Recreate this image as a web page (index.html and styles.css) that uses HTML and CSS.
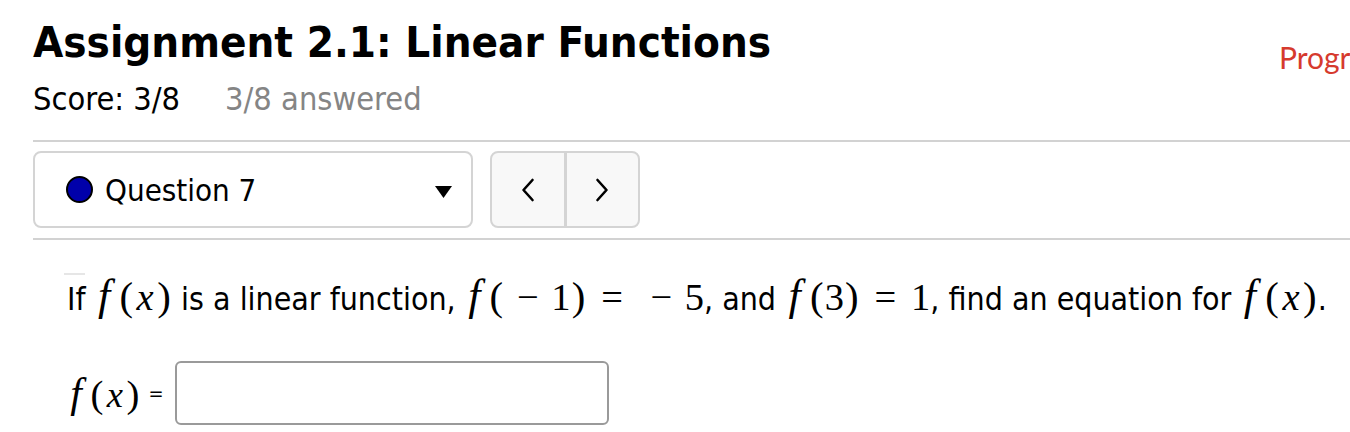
FILE: index.html
```html
<!DOCTYPE html>
<html lang="en">
<head>
<meta charset="utf-8">
<title>Assignment 2.1: Linear Functions</title>
<link rel="stylesheet" href="styles.css">
</head>
<body>
<div class="page">
  <header class="head">
    <div class="titles">
      <h1 class="title">Assignment 2.1: Linear Functions</h1>
      <div class="score">
        <span class="score-val">Score: 3/8</span>
        <span class="answered">3/8 answered</span>
      </div>
    </div>
    <a class="progress" href="#">Progress</a>
  </header>

  <nav class="qnav">
    <div class="qselect">
      <span class="dot"></span>
      <span class="qlabel">Question 7</span>
      <svg class="caret" width="17" height="12" viewBox="0 0 17 12"><path d="M0 0 H17 L8.5 12 Z" fill="#000"/></svg>
    </div>
    <div class="arrows">
      <button class="arrow" aria-label="Previous">
        <svg width="16" height="26" viewBox="0 0 16 26"><path d="M12.5 3 L3.5 13 L12.5 23" fill="none" stroke="#000" stroke-width="2.6" stroke-linecap="round" stroke-linejoin="round"/></svg>
      </button>
      <button class="arrow" aria-label="Next">
        <svg width="16" height="26" viewBox="0 0 16 26"><path d="M3.5 3 L12.5 13 L3.5 23" fill="none" stroke="#000" stroke-width="2.6" stroke-linecap="round" stroke-linejoin="round"/></svg>
      </button>
    </div>
  </nav>

  <section class="question">
    <div class="mark"></div>
    <p class="qtext">If <span class="m"><i class="fn">f</i><span class="p">(</span><i class="var">x</i><span class="p">)</span></span> is a linear function, <span class="m"><i class="fn">f</i><span class="p">(</span><span class="bin">&minus;</span>1<span class="p">)</span><span class="rel">=</span><span class="bin">&minus;</span>5</span>, and <span class="m"><i class="fn">f</i><span class="p">(</span>3<span class="p">)</span><span class="rel">=</span>1</span>, find an equation for <span class="m"><i class="fn">f</i><span class="p">(</span><i class="var">x</i><span class="p">)</span></span>.</p>
    <div class="answer">
      <span class="m m-ans"><i class="fn">f</i><span class="p">(</span><i class="var">x</i><span class="p">)</span></span>
      <span class="eq">=</span>
      <input class="ans-input" type="text" aria-label="answer">
    </div>
  </section>
</div>
</body>
</html>
```
FILE: styles.css
```css
html, body {
  margin: 0;
  padding: 0;
  background: #fff;
  overflow: hidden;
}
body {
  font-family: "DejaVu Sans Condensed", "DejaVu Sans", sans-serif;
  color: #000;
}
.page {
  width: 1420px;
  padding-left: 33px;
}
.head {
  display: flex;
  align-items: flex-start;
  justify-content: space-between;
  box-sizing: border-box;
  padding-top: 14px;
  height: 142px;
  border-bottom: 2px solid #d2d2d2;
  margin-bottom: 9px;
}
.title {
  margin: 0;
  font-weight: 700;
  font-size: 43.5px;
  line-height: 56px;
}
.score {
  display: flex;
  gap: 45px;
  font-size: 32.3px;
  line-height: 40px;
  margin-top: 9px;
}
.answered {
  color: #858585;
}
.progress {
  color: #d63a2e;
  font-family: "Lato", sans-serif;
  font-size: 30px;
  text-decoration: none;
  margin-top: 25px;
  width: 174px;
  white-space: nowrap;
}
.qnav {
  display: flex;
  gap: 17px;
  height: 89px;
  border-bottom: 2px solid #d2d2d2;
  box-sizing: border-box;
}
.qselect {
  width: 440px;
  height: 77px;
  box-sizing: border-box;
  border: 2px solid #d4d4d4;
  border-radius: 8px;
  display: flex;
  align-items: center;
  padding: 0 19px 0 31px;
}
.dot {
  width: 27px;
  height: 27px;
  box-sizing: border-box;
  border-radius: 50%;
  background: #0000aa;
  border: 2.5px solid #000;
  margin-right: 12px;
  flex-shrink: 0;
}
.qlabel {
  font-size: 31px;
  flex: 1;
}
.caret {
  display: block;
  margin-top: 4px;
}
.arrows {
  display: flex;
  width: 150px;
  height: 77px;
  box-sizing: border-box;
  border: 2px solid #d4d4d4;
  border-radius: 8px;
  background: #f8f8f8;
  overflow: hidden;
}
.arrow {
  flex: 1;
  border: none;
  background: transparent;
  display: flex;
  align-items: center;
  justify-content: center;
  padding: 0;
}
.arrow svg {
  display: block;
}
.arrow + .arrow {
  border-left: 3px solid #d4d4d4;
}
.question {
  padding-left: 34px;
}
.mark {
  width: 21px;
  height: 2px;
  background: #e6e6e6;
  margin: 33px 0 0 -3px;
}
.qtext {
  margin: 0;
  font-size: 31.8px;
  line-height: 40px;
  padding-top: 0;
  white-space: nowrap;
}
.m {
  font-family: "Liberation Serif", "DejaVu Serif", serif;
  font-size: 38.5px;
}
.m i {
  font-style: italic;
}
.fn {
  display: inline-block;
  font-size: 1.14em;
  width: 0.54em;
  text-indent: 0.08em;
}
.var {
  display: inline-block;
  width: 0.572em;
  text-align: center;
}
.p {
  display: inline-block;
  width: 0.389em;
  text-align: center;
  font-size: 1.06em;
}
.bin {
  display: inline-block;
  width: 0.778em;
  text-align: center;
  margin: 0 0.222em;
}
.rel {
  display: inline-block;
  width: 0.778em;
  text-align: center;
  margin: 0 0.278em;
}
.answer {
  display: flex;
  align-items: center;
  margin-top: 42px;
}
.m-ans {
  font-size: 36.5px;
}
.eq {
  font-size: 20px;
  margin: 0 11px 0 8px;
}
.ans-input {
  width: 434px;
  height: 64px;
  box-sizing: border-box;
  border: 2px solid #9a9a9a;
  border-radius: 6px;
  margin: 0;
}
```
